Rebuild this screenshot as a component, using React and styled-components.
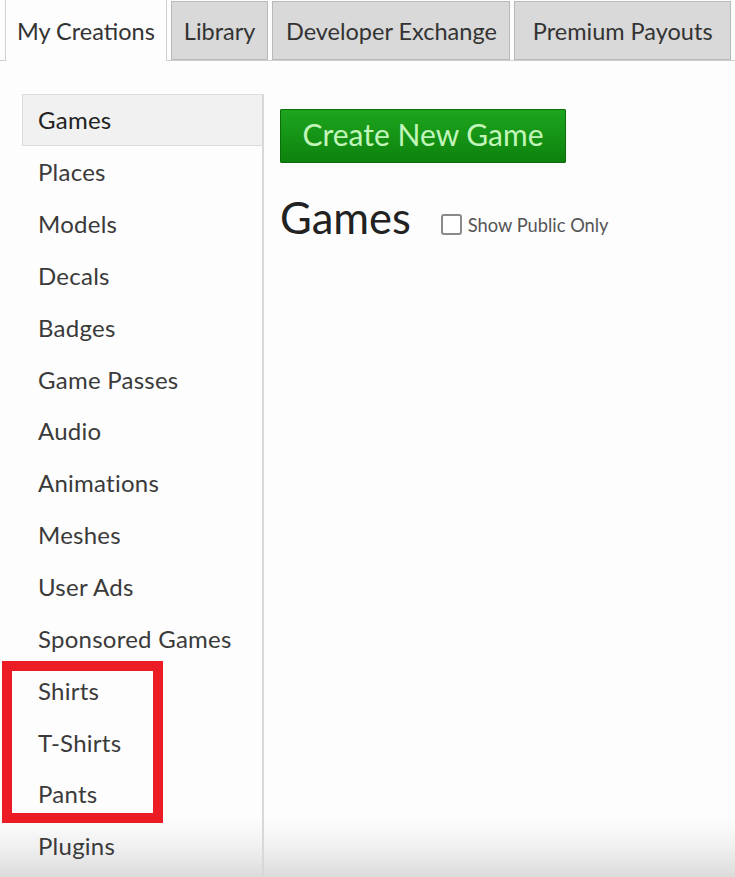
import React from "react";
import styled, { createGlobalStyle } from "styled-components";

const Global = createGlobalStyle`
  html, body { margin: 0; padding: 0; background: #fff; }
  body { font-family: Lato, "Open Sans", "Liberation Sans", sans-serif; }
  * { box-sizing: border-box; }
`;

const Page = styled.div`
  position: relative;
  width: 735px;
  height: 877px;
  overflow: hidden;
  background: linear-gradient(
    to bottom,
    #fdfdfd 0px,
    #fdfdfd 818px,
    #f1f1f1 845px,
    #dcdcdc 877px
  );
`;

const TabBar = styled.div`
  display: flex;
  align-items: flex-end;
  height: 61px;
  padding-left: 5px;
  border-bottom: 1px solid #cfcfcf;
`;

const Tab = styled.div`
  height: ${(p) => (p.$active ? "61px" : "59px")};
  margin-left: ${(p) => (p.$active ? "0" : "4px")};
  margin-bottom: ${(p) => (p.$active ? "-1px" : "0")};
  padding: 0 ${(p) => p.$pad}px;
  display: flex;
  align-items: center;
  font-size: 23.5px;
  color: #333;
  background: ${(p) => (p.$active ? "#fdfdfd" : "#d9d9d9")};
  border: 1px solid ${(p) => (p.$active ? "#d0d0d0" : "#b9b9b9")};
  border-top: ${(p) => (p.$active ? "none" : "1px solid #b9b9b9")};
  border-bottom: ${(p) => (p.$active ? "none" : "1px solid #b9b9b9")};
  white-space: nowrap;
`;

const Body = styled.div`
  display: flex;
  padding-top: 33px;
  height: calc(100% - 61px);
`;

const Sidebar = styled.nav`
  margin-left: 22px;
  width: 242px;
  border-right: 2px solid #d8d8d8;
  display: flex;
  flex-direction: column;
`;

const NavItem = styled.div`
  height: 51.85px;
  flex: none;
  display: flex;
  align-items: center;
  padding-left: 15px;
  font-size: 24px;
  letter-spacing: 0.25px;
  color: ${(p) => (p.$active ? "#222" : "#3a3a3a")};
  background: ${(p) => (p.$active ? "#f1f1f1" : "transparent")};
  border: 1px solid ${(p) => (p.$active ? "#dcdcdc" : "transparent")};
  border-right: none;
`;

const Main = styled.main`
  padding: 15px 0 0 16px;
  display: flex;
  flex-direction: column;
  align-items: flex-start;
`;

const CreateButton = styled.button`
  width: 286px;
  height: 54px;
  border: 1px solid #0b6e0b;
  border-radius: 1px;
  background: linear-gradient(to bottom, #1ea51e, #0d820d);
  color: #c2f5b9;
  font-family: inherit;
  font-size: 30px;
  padding: 0 0 5px;
  cursor: pointer;
`;

const HeadingRow = styled.div`
  display: flex;
  align-items: center;
  margin-top: 33px;
`;

const Heading = styled.h1`
  margin: 0;
  font-size: 43.5px;
  font-weight: 400;
  color: #222;
  line-height: 1;
`;

const CheckLabel = styled.label`
  display: flex;
  align-items: center;
  margin-left: 30px;
  margin-top: 14px;
  font-size: 18.3px;
  color: #555;
`;

const Box = styled.span`
  width: 21px;
  height: 21px;
  border: 2px solid #8a8a8a;
  border-radius: 3px;
  background: #fff;
  margin-right: 6px;
`;

const Highlight = styled.div`
  position: absolute;
  left: 2px;
  top: 661px;
  width: 161px;
  height: 162px;
  border: 10px solid #ec1c24;
  pointer-events: none;
  z-index: 2;
`;

const tabs = [
  { label: "My Creations", active: true, pad: 11 },
  { label: "Library", pad: 12 },
  { label: "Developer Exchange", pad: 12.5 },
  { label: "Premium Payouts", pad: 17.5 },
];

const navItems = [
  "Games",
  "Places",
  "Models",
  "Decals",
  "Badges",
  "Game Passes",
  "Audio",
  "Animations",
  "Meshes",
  "User Ads",
  "Sponsored Games",
  "Shirts",
  "T-Shirts",
  "Pants",
  "Plugins",
];

export default function App() {
  return (
    <Page>
      <Global />
      <TabBar>
        {tabs.map((t) => (
          <Tab key={t.label} $active={t.active} $pad={t.pad}>
            {t.label}
          </Tab>
        ))}
      </TabBar>
      <Body>
        <Sidebar>
          {navItems.map((n, i) => (
            <NavItem key={n} $active={i === 0}>
              {n}
            </NavItem>
          ))}
        </Sidebar>
        <Main>
          <CreateButton>Create New Game</CreateButton>
          <HeadingRow>
            <Heading>Games</Heading>
            <CheckLabel>
              <Box />
              Show Public Only
            </CheckLabel>
          </HeadingRow>
        </Main>
      </Body>
      <Highlight />
    </Page>
  );
}
